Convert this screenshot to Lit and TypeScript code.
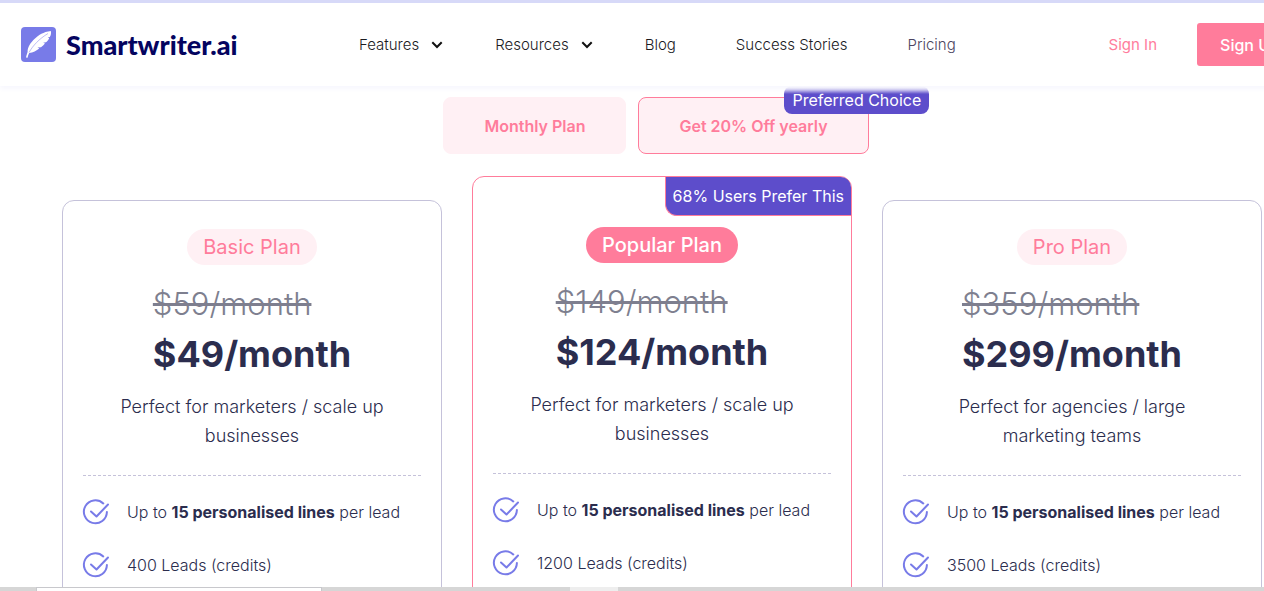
import { LitElement, html, css, svg } from "lit";
import { customElement, property } from "lit/decorators.js";

interface Plan {
  name: string;
  oldPrice: string;
  price: string;
  blurb: string;
  leads: string;
  popular?: boolean;
}

const PLANS: Plan[] = [
  { name: "Basic Plan", oldPrice: "$59/month", price: "$49/month", blurb: "Perfect for marketers / scale up businesses", leads: "400 Leads (credits)" },
  { name: "Popular Plan", oldPrice: "$149/month", price: "$124/month", blurb: "Perfect for marketers / scale up businesses", leads: "1200 Leads (credits)", popular: true },
  { name: "Pro Plan", oldPrice: "$359/month", price: "$299/month", blurb: "Perfect for agencies / large marketing teams", leads: "3500 Leads (credits)" },
];

const check = svg`<svg class="check" viewBox="0 0 26 26" width="26" height="26" fill="none" stroke="#787be8" stroke-width="2" stroke-linecap="round" stroke-linejoin="round" aria-hidden="true">
  <path d="M20.300 4.400A11.500 11.500 0 1 0 23.900 13"/>
  <path d="M8 12.500l5.500 5L25 5.500"/>
</svg>`;

const chevron = svg`<svg width="12" height="8" viewBox="0 0 12 8" fill="none" stroke="#111" stroke-width="2" aria-hidden="true"><path d="M1.300 1.300L6 6l4.700-4.700"/></svg>`;

@customElement("site-header")
class SiteHeader extends LitElement {
  static styles = css`
    :host { display: block; position: relative; z-index: 2; }
    .bar {
      display: flex; align-items: center; height: 83px; padding: 0 21px;
      border-top: 3px solid #d7d9f8; background: #fff;
      box-shadow: 0 3px 5px #f7f7fe;
    }
    .logo { display: flex; align-items: center; gap: 10px; color: #04045f; text-decoration: none; font: 900 27px/35px Lato, sans-serif; width: 218px; white-space: nowrap; }
    nav { display: flex; align-items: center; margin-left: 120px; gap: 60px; }
    .menus { display: flex; gap: 52px; margin-right: -8px; }
    a, button { font: 400 15px/20px Inter, sans-serif; white-space: nowrap; }
    .link, .menu { color: #1b1b1f; font-weight: 300; text-decoration: none; }
    .menu { display: flex; align-items: center; gap: 12px; padding: 0; border: 0; background: none; }
    .current { color: #4b4560; }
    .account { display: flex; align-items: center; gap: 40px; margin-left: auto; }
    .signin { color: #ff7d9c; text-decoration: none; }
    .signup { width: 106px; height: 43px; padding: 0; border: 0; border-radius: 3px; background: #ff7c9b; color: #fff; font-size: 16px; font-weight: 500; }
  `;
  render() {
    return html`<header class="bar">
      <a class="logo" href="#">
        <svg width="35" height="35" viewBox="0 0 35 35" aria-hidden="true">
          <rect width="35" height="35" rx="4" fill="#787be8"/>
          <path fill="#fff" d="M5 30.500C5.600 28 6 26.500 6.600 25C6.400 20.500 9.500 15.500 14 11.500C18 8 22 5 29.800 4C30.400 6 29.800 8.500 28.800 10L26.800 10.600L28.200 11.200C27.300 13 26.400 14 25 15.300L22.200 15.800L24 16.500C22.800 18 21.500 19.200 20 20.200L16.500 20.600L18.300 21.600C15.500 23.800 12 25.800 8.200 26C7.300 27.500 7 29 6.600 30.800Z"/>
          <path d="M8 25.500C12 18.500 18 12 27 6.500" fill="none" stroke="#787be8" stroke-width=".7" opacity=".7"/>
        </svg>
        <span>Smartwriter.ai</span>
      </a>
      <nav>
        <div class="menus">
          <button class="menu">Features ${chevron}</button>
          <button class="menu">Resources ${chevron}</button>
        </div>
        <a class="link" href="#">Blog</a>
        <a class="link" href="#">Success Stories</a>
        <a class="link current" href="#">Pricing</a>
      </nav>
      <div class="account">
        <a class="signin" href="#">Sign In</a>
        <button class="signup">Sign Up</button>
      </div>
    </header>`;
  }
}

@customElement("plan-card")
class PlanCard extends LitElement {
  @property({ attribute: false }) plan!: Plan;
  static styles = css`
    :host { display: block; flex: 1; }
    .card {
      position: relative; box-sizing: border-box; min-height: 640px; padding: 28px 20px;
      border: 1px solid #c5c2da; border-radius: 12px; background: #fff;
      display: flex; flex-direction: column; align-items: center; color: #2b2d4e;
    }
    .popular { border-color: #ff7c9b; padding-top: 50px; }
    .flag {
      position: absolute; top: 0; right: 0; padding: 0 7px; border: 1px solid #ff7c9b; border-width: 0 0 1px 1px;
      border-radius: 0 10px 0 12px; background: #5d4dcb; color: #fff; font-size: 16px; line-height: 38px;
    }
    .name { margin: 0; padding: 0 16px; border-radius: 18px; background: #fff0f4; color: #ff7c9b; font-size: 20px; line-height: 36px; font-weight: 400; }
    .popular .name { background: #ff7c9b; color: #fff; font-weight: 500; }
    .prices { display: flex; flex-direction: column; align-items: flex-start; margin-top: 16px; }
    .old { color: #7e7f8f; font-size: 31px; line-height: 46px; font-weight: 300; }
    .price { font-size: 36px; line-height: 54px; font-weight: 700; }
    .blurb { box-sizing: border-box; width: 100%; margin: 11px 0 25px; padding: 0 24px; text-align: center; font-size: 18px; line-height: 29px; font-weight: 300; }
    ul { width: 100%; margin: 0; padding: 23px 0 0; border-top: 1px dashed #c5c2da; list-style: none; display: grid; gap: 27px; }
    li { display: flex; align-items: center; gap: 18px; font-size: 16px; line-height: 26px; font-weight: 300; white-space: nowrap; }
    b { font-weight: 700; }
    .check { flex: none; overflow: visible; }
  `;
  render() {
    const p = this.plan;
    return html`<article class="card ${p.popular ? "popular" : ""}">
      ${p.popular ? html`<div class="flag">68% Users Prefer This</div>` : ""}
      <h2 class="name">${p.name}</h2>
      <div class="prices"><s class="old">${p.oldPrice}</s><strong class="price">${p.price}</strong></div>
      <p class="blurb">${p.blurb}</p>
      <ul>
        <li>${check}<span>Up to <b>15 personalised lines</b> per lead</span></li>
        <li>${check}<span>${p.leads}</span></li>
      </ul>
    </article>`;
  }
}

@customElement("app-root")
class AppRoot extends LitElement {
  static styles = css`
    :host { display: flex; flex-direction: column; height: 100vh; overflow: hidden; background: #fff; font-family: Inter, sans-serif; }
    .page { flex: 1; min-height: 0; min-width: 1324px; overflow: hidden; }
    .toggle { display: flex; justify-content: center; gap: 12px; padding: 11px 12px 0 0; }
    .period { position: relative; height: 57px; padding: 0 40px; border: 1px solid #fff0f4; border-radius: 8px; background: #fff0f4; color: #ff7c9b; font: 600 16px/24px Inter, sans-serif; }
    .active { border-color: #ff7c9b; }
    .badge { position: absolute; left: 145px; bottom: 39px; padding: 0 8px; border-radius: 8px; background: linear-gradient(#fff 0, #5d4dcb 8px); color: #fff; font-size: 16px; font-weight: 400; line-height: 28px; white-space: nowrap; }
    .plans { display: flex; align-items: flex-end; gap: 30px; padding: 22px 62px 0; }
    .plan { margin-top: 24px; align-self: flex-start; }
    .featured { margin-top: 0; }
    .dock { display: flex; flex: none; height: 4px; padding-left: 36px; background: #d6d6d6; }
    .tab { width: 286px; box-sizing: border-box; border: 1px solid #c8c8cc; border-bottom: 0; background: #fff; }
    .chip { width: 48px; margin-left: 248px; background: #eee; }
  `;
  render() {
    return html`
      <div class="page">
        <site-header></site-header>
        <main>
          <div class="toggle">
            <button class="period">Monthly Plan</button>
            <button class="period active">Get 20% Off yearly<span class="badge">Preferred Choice</span></button>
          </div>
          <section class="plans">
            ${PLANS.map((p) => html`<plan-card class="plan ${p.popular ? "featured" : ""}" .plan=${p}></plan-card>`)}
          </section>
        </main>
      </div>
      <div class="dock"><div class="tab"></div><div class="chip"></div></div>
    `;
  }
}
